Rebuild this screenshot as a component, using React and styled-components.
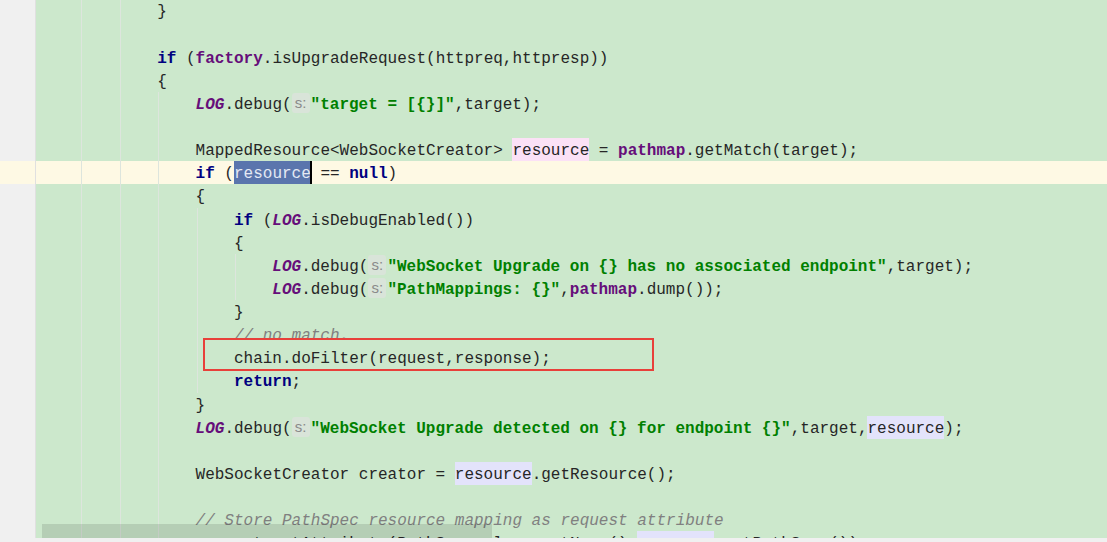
import React from 'react';
import styled, { createGlobalStyle, css } from 'styled-components';

const LH = 23.14;
const CW = 9.6;
const SHIFT = 4;

const Global = createGlobalStyle`
  html, body { margin: 0; padding: 0; background: #cce8cc; overflow: hidden; }
  #root { width: 1107px; height: 542px; }
`;

const Page = styled.div`
  width: 1107px;
  height: 542px;
  display: flex;
  flex-direction: column;
  overflow: hidden;
  font-family: "Liberation Mono", "Courier New", monospace;
  font-size: 16px;
`;

const Editor = styled.div`
  position: relative;
  flex: 1 1 auto;
  min-height: 0;
  overflow: hidden;
  background: #cce8cc;
`;

const Lines = styled.div`
  display: flex;
  flex-direction: column;
  margin-top: -0.6px;
`;

const Row = styled.div`
  display: flex;
  flex: none;
  height: ${LH}px;
  background: ${(p) => (p.$current ? '#fef9e4' : 'transparent')};
`;

const Gutter = styled.div`
  width: 35px;
  flex: none;
  background: ${(p) => (p.$current ? '#fef9e4' : '#f0f0f0')};
  border-right: 1px solid #e0e0e0;
`;

const Code = styled.div`
  display: flex;
  align-items: stretch;
  padding-left: 6px;
  white-space: pre;
`;

const IndentBlock = styled.span`
  flex: none;
  width: ${4 * CW}px;
  ${(p) =>
    p.$guide &&
    css`
      background: linear-gradient(
        to right,
        transparent 1px,
        #dde5dd 1px,
        #dde5dd 2px,
        transparent 2px
      );
    `}
`;

const kinds = {
  p: css`color: #262626;`,
  k: css`color: #000080; font-weight: bold;`,
  f: css`color: #660e7a; font-weight: bold;`,
  l: css`color: #660e7a; font-weight: bold; font-style: italic;`,
  s: css`color: #008000; font-weight: bold;`,
  c: css`color: #808080; font-style: italic;`,
  pink: css`color: #262626; background: #fbe1f6;`,
  lav: css`color: #262626; background: #e3e3fb;`,
  sel: css`color: #e4e9f4; background: #5a75ad;`,
};

const Tok = styled.span`
  flex: none;
  box-sizing: border-box;
  padding-top: ${SHIFT}px;
  line-height: ${LH - SHIFT}px;
  ${(p) => kinds[p.$kind]}
`;

const Hint = styled.span`
  flex: none;
  align-self: center;
  width: 18px;
  height: 20px;
  margin-right: 1px;
  border-radius: 3px;
  background: #d9e4d9;
  color: #8a8a8a;
  font-family: "Liberation Sans", Arial, sans-serif;
  font-size: 15px;
  line-height: 20px;
  text-align: center;
`;

const Caret = styled.span`
  flex: none;
  position: relative;
  z-index: 1;
  width: 2px;
  margin: 0 -1px;
  background: #000;
`;

const Annotation = styled.div`
  position: absolute;
  left: 203px;
  top: 338px;
  width: 451px;
  height: 33px;
  box-sizing: border-box;
  border: 2px solid #e8403a;
`;

const Thumb = styled.div`
  position: absolute;
  left: 42px;
  bottom: 0;
  width: 450px;
  height: 14px;
  background: rgba(0, 0, 0, 0.11);
`;

const BottomStrip = styled.div`
  flex: none;
  height: 4px;
  background: #f0f0f0;
`;

const G3 = [1, 2];
const G4 = [1, 2, 3];
const G5 = [1, 2, 3, 4];
const G6 = [1, 2, 3, 4, 5];

const lines = [
  { indent: 3, guides: G3, tokens: [['p', '}']] },
  { indent: 3, guides: G3, tokens: [] },
  {
    indent: 3,
    guides: G3,
    tokens: [
      ['k', 'if'],
      ['p', ' ('],
      ['f', 'factory'],
      ['p', '.isUpgradeRequest(httpreq,httpresp))'],
    ],
  },
  { indent: 3, guides: G3, tokens: [['p', '{']] },
  {
    indent: 4,
    guides: G4,
    tokens: [
      ['l', 'LOG'],
      ['p', '.debug('],
      ['h', 's:'],
      ['s', '"target = [{}]"'],
      ['p', ',target);'],
    ],
  },
  { indent: 4, guides: G4, tokens: [] },
  {
    indent: 4,
    guides: G4,
    tokens: [
      ['p', 'MappedResource<WebSocketCreator> '],
      ['pink', 'resource'],
      ['p', ' = '],
      ['f', 'pathmap'],
      ['p', '.getMatch(target);'],
    ],
  },
  {
    indent: 4,
    guides: G4,
    current: true,
    tokens: [
      ['k', 'if'],
      ['p', ' ('],
      ['sel', 'resource'],
      ['caret', ''],
      ['p', ' == '],
      ['k', 'null'],
      ['p', ')'],
    ],
  },
  { indent: 4, guides: G4, tokens: [['p', '{']] },
  {
    indent: 5,
    guides: G5,
    tokens: [
      ['k', 'if'],
      ['p', ' ('],
      ['l', 'LOG'],
      ['p', '.isDebugEnabled())'],
    ],
  },
  { indent: 5, guides: G5, tokens: [['p', '{']] },
  {
    indent: 6,
    guides: G6,
    tokens: [
      ['l', 'LOG'],
      ['p', '.debug('],
      ['h', 's:'],
      ['s', '"WebSocket Upgrade on {} has no associated endpoint"'],
      ['p', ',target);'],
    ],
  },
  {
    indent: 6,
    guides: G6,
    tokens: [
      ['l', 'LOG'],
      ['p', '.debug('],
      ['h', 's:'],
      ['s', '"PathMappings: {}"'],
      ['p', ','],
      ['f', 'pathmap'],
      ['p', '.dump());'],
    ],
  },
  { indent: 5, guides: G5, tokens: [['p', '}']] },
  { indent: 5, guides: G5, tokens: [['c', '// no match.']] },
  { indent: 5, guides: G5, tokens: [['p', 'chain.doFilter(request,response);']] },
  { indent: 5, guides: G5, tokens: [['k', 'return'], ['p', ';']] },
  { indent: 4, guides: G4, tokens: [['p', '}']] },
  {
    indent: 4,
    guides: G4,
    tokens: [
      ['l', 'LOG'],
      ['p', '.debug('],
      ['h', 's:'],
      ['s', '"WebSocket Upgrade detected on {} for endpoint {}"'],
      ['p', ',target,'],
      ['lav', 'resource'],
      ['p', ');'],
    ],
  },
  { indent: 4, guides: G4, tokens: [] },
  {
    indent: 4,
    guides: G4,
    tokens: [
      ['p', 'WebSocketCreator creator = '],
      ['lav', 'resource'],
      ['p', '.getResource();'],
    ],
  },
  { indent: 4, guides: G4, tokens: [] },
  {
    indent: 4,
    guides: G4,
    tokens: [['c', '// Store PathSpec resource mapping as request attribute']],
  },
  {
    indent: 4,
    guides: G4,
    tokens: [
      ['p', 'request.setAttribute(PathSpec.class.getName(),'],
      ['lav', 'resource'],
      ['p', '.getPathSpec());'],
    ],
  },
];

function CodeLine({ line }) {
  return (
    <Row $current={line.current}>
      <Gutter $current={line.current} />
      <Code>
        {Array.from({ length: line.indent }, (_, i) => (
          <IndentBlock key={'i' + i} $guide={line.guides.includes(i)} />
        ))}
        {line.tokens.map(([kind, text], i) => {
          if (kind === 'h') return <Hint key={i}>{text}</Hint>;
          if (kind === 'caret') return <Caret key={i} />;
          return (
            <Tok key={i} $kind={kind}>
              {text}
            </Tok>
          );
        })}
      </Code>
    </Row>
  );
}

export default function App() {
  return (
    <>
      <Global />
      <Page>
        <Editor>
          <Lines>
            {lines.map((line, i) => (
              <CodeLine key={i} line={line} />
            ))}
          </Lines>
          <Annotation />
          <Thumb />
        </Editor>
        <BottomStrip />
      </Page>
    </>
  );
}
